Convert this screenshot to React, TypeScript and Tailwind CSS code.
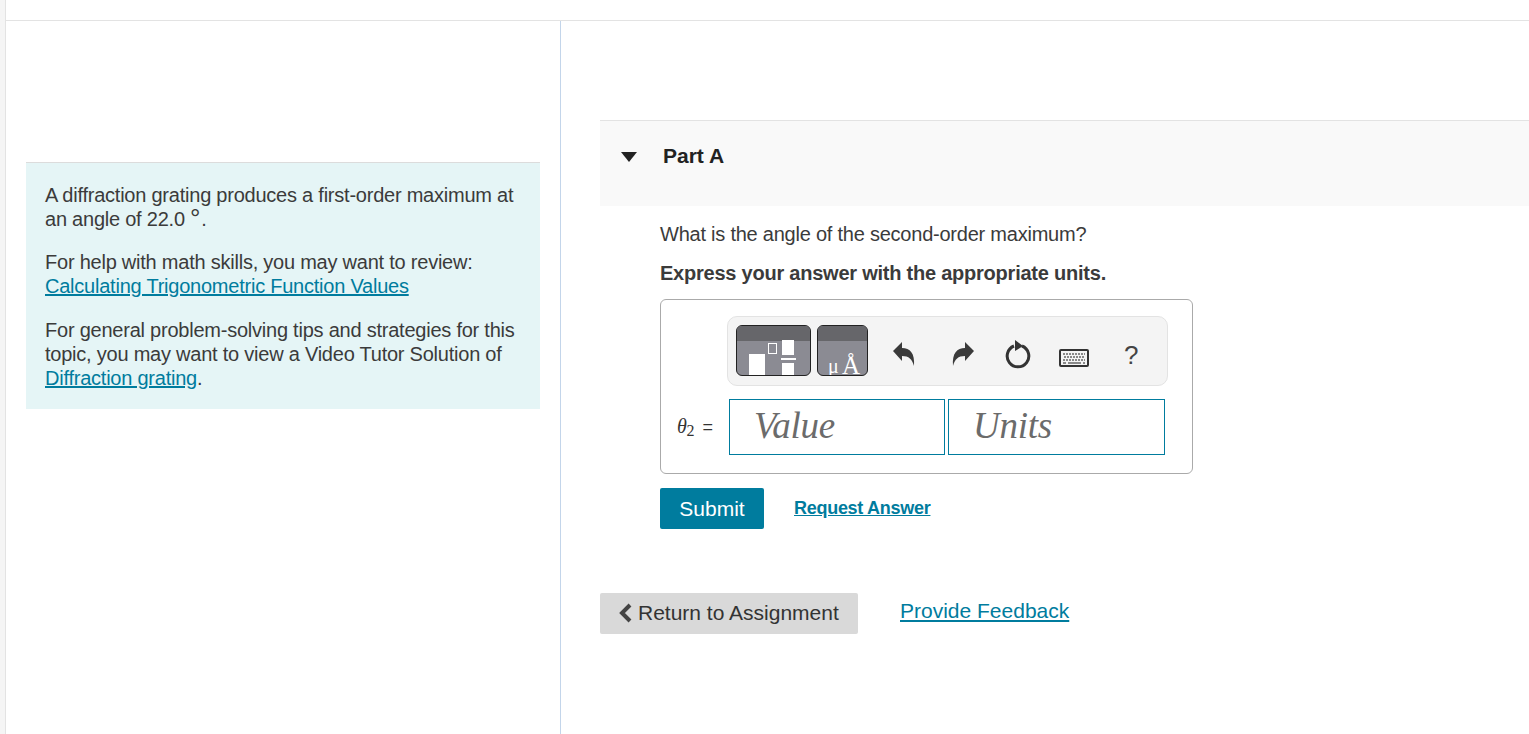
import React from "react"

const sans = { fontFamily: '"Liberation Sans", Arial, sans-serif' }
const serif = { fontFamily: '"Liberation Serif", serif' }

function Toolbar() {
  return (
    <div className="flex h-[70px] w-[441px] items-start rounded-[10px] border border-[#e3e3e3] bg-[#f4f4f4] pl-[8px] pt-[8px]">
      <div className="relative h-[51px] w-[75px] overflow-hidden rounded-[6px] border border-[#222] bg-[#8b8b93]">
        <div className="h-[15px] bg-[#66666a]" />
        <div className="absolute bottom-0 left-[12px] h-[21px] w-[16px] bg-white" />
        <div className="absolute left-[31px] top-[17px] h-[11px] w-[9px] border border-white" />
        <div className="absolute left-[45px] top-[14px] h-[15px] w-[12px] bg-white" />
        <div className="absolute left-[44px] top-[32px] h-[2px] w-[15px] bg-white" />
        <div className="absolute bottom-0 left-[45px] h-[12px] w-[12px] bg-white" />
      </div>
      <div className="relative ml-[6px] h-[51px] w-[51px] overflow-hidden rounded-[6px] border border-[#222] bg-[#8b8b93]">
        <div className="h-[15px] bg-[#66666a]" />
        <span className="absolute bottom-[-1px] left-[10px] text-[20px] leading-[20px] text-white" style={serif}>μ</span>
        <span className="absolute bottom-[-3px] left-[24px] text-[25px] leading-[25px] text-white" style={serif}>Å</span>
      </div>
      <svg className="ml-[25px] mt-[17px]" width="22" height="25" viewBox="0 0 22 25">
        <path d="M0 9 L9 0 V6 C17 6 22 11 21 24 C19 17 16 14 9 14 V19 Z" fill="#3a3a3a" />
      </svg>
      <svg className="ml-[37px] mt-[17px]" width="22" height="25" viewBox="0 0 22 25">
        <path d="M22 9 L13 0 V6 C5 6 0 11 1 24 C3 17 6 14 13 14 V19 Z" fill="#3a3a3a" />
      </svg>
      <svg className="ml-[31px] mt-[15px]" width="26" height="29" viewBox="0 0 26 29">
        <path d="M9 6 A10.8 10.8 0 1 0 17 6" fill="none" stroke="#333" strokeWidth="3" />
        <path d="M10 0 L18 6 L10 11 Z" fill="#333" />
      </svg>
      <svg className="ml-[28px] mt-[24px]" width="30" height="18" viewBox="0 0 30 18">
        <rect x="1" y="1" width="28" height="16" rx="1" fill="#f4f4f4" stroke="#333" strokeWidth="2" />
        <path d="M4 5 H26 M5 8 H25 M4 11 H26" stroke="#666" strokeWidth="1.5" strokeDasharray="2 1" />
        <path d="M4 14 H7 M9 14 H22 M24 14 H26" stroke="#666" strokeWidth="1.5" />
      </svg>
      <span className="ml-[35px] mt-[16px] text-[26px] leading-[28px] text-[#444]">?</span>
    </div>
  )
}

function AnswerBox() {
  return (
    <div className="mt-[14px] h-[175px] w-[533px] rounded-[6px] border border-[#aaa] pl-[16px] pt-[16px]">
      <div className="ml-[50px]">
        <Toolbar />
      </div>
      <div className="mt-[13px] flex items-center">
        <span className="flex w-[52px] items-baseline text-[20px] leading-[24px] text-[#333]" style={serif}>
          <i>θ</i>
          <span className="relative top-[3px] text-[16px]">2</span>
          <span className="ml-[8px] text-[18px]" style={sans}>=</span>
        </span>
        <div className="flex h-[56px] w-[216px] items-center border border-[#007c9e] pb-[2px] pl-[24px] text-[37px] italic text-[#6b6b6b]" style={serif}>Value</div>
        <div className="ml-[3px] flex h-[56px] w-[217px] items-center border border-[#007c9e] pb-[2px] pl-[24px] text-[37px] italic text-[#6b6b6b]" style={serif}>Units</div>
      </div>
    </div>
  )
}

export default function App() {
  return (
    <div className="flex h-[734px] w-[1529px] overflow-hidden bg-white text-[20px] leading-[24px] tracking-[-0.23px] text-[#3b3b3b]" style={sans}>
      <div className="w-[6px] border-r border-[#e3e3e3] bg-[#f5f5f5]" />
      <div className="flex flex-1 flex-col">
        <div className="h-[21px] border-b border-[#e3e3e3]" />
        <div className="flex flex-1">
          <aside className="w-[555px] border-r border-[#c3d5ea] pl-[20px] pt-[141px]">
            <div className="h-[247px] w-[514px] border-t border-[#dcdcdc] bg-[#e5f5f6] px-[19px] pt-[20px]">
              <p>
                A diffraction grating produces a first-order maximum at an angle of 22.0{" "}
                <span className="relative top-[1px] mr-[1px] text-[26px] leading-[0] font-light">°</span>.
              </p>
              <p className="mt-[19px]">
                For help with math skills, you may want to review:
                <br />
                <a className="text-[#007c9e] underline">Calculating Trigonometric Function Values</a>
              </p>
              <p className="mt-[20px]">
                For general problem-solving tips and strategies for this topic, you may want to view a Video Tutor Solution of{" "}
                <a className="text-[#007c9e] underline">Diffraction grating</a>.
              </p>
            </div>
          </aside>
          <main className="flex-1 pl-[39px] pt-[99px]">
            <div className="flex h-[86px] items-start border-t border-[#e3e3e3] bg-[#f9f9f9] pl-[20px] pt-[23px]">
              <svg className="mt-[8px]" width="18" height="10" viewBox="0 0 18 10">
                <path d="M1 0 H17 L9 10 Z" fill="#222" />
              </svg>
              <h2 className="ml-[25px] text-[21px] font-bold tracking-normal text-[#222]">Part A</h2>
            </div>
            <div className="pl-[60px]">
              <p className="mt-[16px]">What is the angle of the second-order maximum?</p>
              <p className="mt-[15px] font-bold">Express your answer with the appropriate units.</p>
              <AnswerBox />
              <div className="mt-[14px] flex items-center">
                <button className="h-[41px] w-[104px] rounded-[2px] bg-[#007c9e] text-[21px] tracking-normal text-white">Submit</button>
                <a className="mb-[2px] ml-[30px] text-[18px] font-bold tracking-[-0.28px] text-[#007c9e] underline">Request Answer</a>
              </div>
            </div>
            <div className="mt-[64px] flex items-start">
              <button className="flex h-[41px] w-[258px] items-center rounded-[2px] bg-[#d9d9d9] pb-[2px] pl-[18px] text-[21px] tracking-normal text-[#333]">
                <svg width="15" height="20" viewBox="0 0 15 20">
                  <path d="M12 2 L4 10 L12 18" fill="none" stroke="#444" strokeWidth="4" />
                </svg>
                <span className="ml-[5px]">Return to Assignment</span>
              </button>
              <a className="ml-[42px] mt-[6px] text-[21px] tracking-normal text-[#007c9e] underline">Provide Feedback</a>
            </div>
          </main>
        </div>
      </div>
    </div>
  )
}
